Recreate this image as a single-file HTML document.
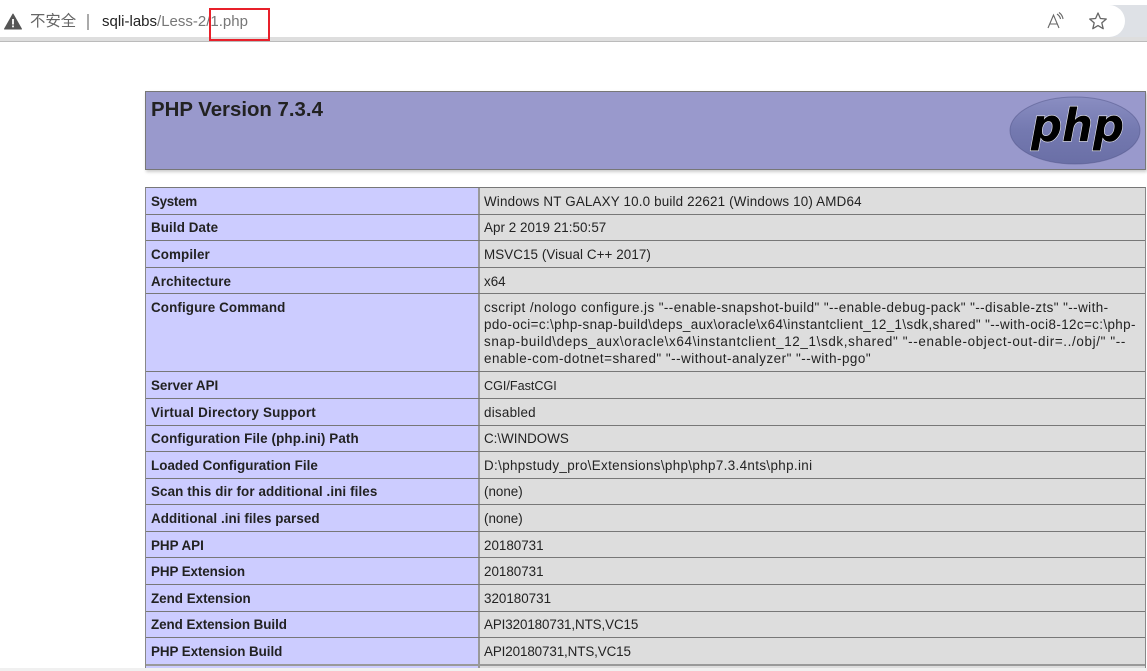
<!DOCTYPE html>
<html lang="zh">
<head>
<meta charset="utf-8">
<title>phpinfo()</title>
<style>
html,body{margin:0;padding:0;background:#fff;width:1147px;height:671px;overflow:hidden}
body{position:relative;font-family:"Liberation Sans","Noto Sans CJK SC",sans-serif;color:#222}
.abs{position:absolute}
.chrome{left:0;top:5px;width:1147px;height:32px;background:#dee1e6}
.strip{left:0;top:37px;width:1147px;height:4px;background:#dedede;border-bottom:1px solid #bbb}
.pill{left:0;top:5px;width:1125px;height:32px;background:#fff;border-radius:0 16px 16px 0}
.url{top:12px;font-size:15px;line-height:20px;white-space:nowrap;color:#777}
.tbl{left:145px;top:187px;width:1001px;height:481px;background:#ddd;border-top:1px solid #777;border-right:1px solid #888;border-left:1px solid #888;box-sizing:border-box;overflow:hidden}
.e{position:absolute;left:146px;top:188px;width:333px;height:480px;background:#ccf}
.vl{position:absolute;left:478px;top:188px;width:2px;height:480px;background:#999}
.r{position:absolute;left:146px;width:999px;height:1px;background:#777}
.k{position:absolute;left:151px;font-size:13.4px;font-weight:bold;line-height:16px;color:#222;white-space:nowrap;margin-top:1px}
.v{position:absolute;left:484px;font-size:13.4px;line-height:16px;color:#222;white-space:nowrap;margin-top:1px}
</style>
</head>
<body>
<div class="abs chrome"></div>
<div class="abs strip"></div>
<div class="abs pill"></div>
<svg class="abs" style="left:4px;top:13px" width="18" height="17" viewBox="0 0 18 17"><path d="M9 1 L17.5 16 H0.5 Z" fill="#555" stroke="#555" stroke-linejoin="round"/><rect x="8.1" y="6" width="1.8" height="5.5" fill="#fff"/><rect x="8.1" y="12.5" width="1.8" height="1.8" fill="#fff"/></svg>
<div class="abs url" style="left:30px;color:#666;font-size:15.4px">不安全</div>
<div class="abs" style="left:87px;top:14px;width:2px;height:16px;background:#aaa"></div>
<div class="abs url" style="left:102px"><span style="color:#222">sqli-labs</span>/Less-2/1.php</div>
<div class="abs" style="left:209px;top:8px;width:61px;height:33px;border:2px solid #e8202a;box-sizing:border-box"></div>
<svg class="abs" style="left:1046px;top:11px" width="20" height="20" viewBox="0 0 20 20" fill="none" stroke="#666" stroke-width="1.1"><path d="M2 17 L7.5 4 L13 17 M4 13 H11"/><path d="M11 3 Q14 5 14.5 8 M13 1.5 Q16.5 4 17 8"/></svg>
<svg class="abs" style="left:1088px;top:11px" width="20" height="20" viewBox="0 0 20 20" fill="none" stroke="#666" stroke-width="1.3"><path d="M10 2 L12.4 7.5 L18.3 8 L13.8 11.9 L15.2 17.7 L10 14.6 L4.8 17.7 L6.2 11.9 L1.7 8 L7.6 7.5 Z" stroke-linejoin="round"/></svg>

<div class="abs" style="left:145px;top:91px;width:1001px;height:79px;background:#99c;border:1px solid #777;box-sizing:border-box;box-shadow:1px 2px 3px #ccc"></div>
<div class="abs" style="left:151px;top:97px;font-size:20.4px;line-height:26px;font-weight:bold;color:#222;white-space:nowrap">PHP Version 7.3.4</div>
<svg class="abs" style="left:1005px;top:92px" width="140" height="76" viewBox="0 0 140 76">
<defs><linearGradient id="g" x1="0" y1="0" x2="0" y2="1"><stop offset="0" stop-color="#8a8ec2"/><stop offset=".5" stop-color="#7479b0"/><stop offset="1" stop-color="#6a6fa6"/></linearGradient></defs>
<ellipse cx="70" cy="38.5" rx="65" ry="33.5" fill="url(#g)" stroke="#4f5488" stroke-opacity=".5" stroke-width="1"/>
<text x="26" y="49" font-family="DejaVu Sans, sans-serif" font-size="45" font-weight="bold" font-style="italic" fill="#000" stroke="#fff" stroke-opacity=".85" stroke-width="1.2" paint-order="stroke" textLength="93" lengthAdjust="spacingAndGlyphs">php</text>
</svg>

<div class="abs tbl"></div>
<div class="e"></div>
<div class="vl"></div>
<div class="r" style="top:214px"></div>
<div class="r" style="top:240px"></div>
<div class="r" style="top:267px"></div>
<div class="r" style="top:293px"></div>
<div class="r" style="top:371px"></div>
<div class="r" style="top:398px"></div>
<div class="r" style="top:425px"></div>
<div class="r" style="top:451px"></div>
<div class="r" style="top:478px"></div>
<div class="r" style="top:504px"></div>
<div class="r" style="top:531px"></div>
<div class="r" style="top:557px"></div>
<div class="r" style="top:584px"></div>
<div class="r" style="top:611px"></div>
<div class="r" style="top:637px"></div>
<div class="r" style="top:664px;height:2px;background:#999"></div>

<div class="k" style="top:193px;letter-spacing:-.3px">System</div>
<div class="v" style="top:193px;letter-spacing:.17px">Windows NT GALAXY 10.0 build 22621 (Windows 10) AMD64</div>
<div class="k" style="top:219px;letter-spacing:.1px">Build Date</div>
<div class="v" style="top:219px;letter-spacing:.05px">Apr 2 2019 21:50:57</div>
<div class="k" style="top:246px;letter-spacing:.1px">Compiler</div>
<div class="v" style="top:246px;letter-spacing:.08px">MSVC15 (Visual C++ 2017)</div>
<div class="k" style="top:273px;letter-spacing:.1px">Architecture</div>
<div class="v" style="top:273px">x64</div>
<div class="k" style="top:299px;letter-spacing:.12px">Configure Command</div>
<div class="v" style="top:299px;letter-spacing:.43px">cscript /nologo configure.js "--enable-snapshot-build" "--enable-debug-pack" "--disable-zts" "--with-</div>
<div class="v" style="top:316px;letter-spacing:.39px">pdo-oci=c:\php-snap-build\deps_aux\oracle\x64\instantclient_12_1\sdk,shared" "--with-oci8-12c=c:\php-</div>
<div class="v" style="top:333px;letter-spacing:.65px">snap-build\deps_aux\oracle\x64\instantclient_12_1\sdk,shared" "--enable-object-out-dir=../obj/" "--</div>
<div class="v" style="top:350px;letter-spacing:.5px">enable-com-dotnet=shared" "--without-analyzer" "--with-pgo"</div>
<div class="k" style="top:377px">Server API</div>
<div class="v" style="top:377px;font-size:12.6px">CGI/FastCGI</div>
<div class="k" style="top:404px;letter-spacing:.24px">Virtual Directory Support</div>
<div class="v" style="top:404px;letter-spacing:.25px">disabled</div>
<div class="k" style="top:430px;letter-spacing:.12px">Configuration File (php.ini) Path</div>
<div class="v" style="top:430px">C:\WINDOWS</div>
<div class="k" style="top:457px;letter-spacing:.04px">Loaded Configuration File</div>
<div class="v" style="top:457px;letter-spacing:.36px">D:\phpstudy_pro\Extensions\php\php7.3.4nts\php.ini</div>
<div class="k" style="top:483px;letter-spacing:.1px">Scan this dir for additional .ini files</div>
<div class="v" style="top:483px">(none)</div>
<div class="k" style="top:510px;letter-spacing:.07px">Additional .ini files parsed</div>
<div class="v" style="top:510px">(none)</div>
<div class="k" style="top:537px">PHP API</div>
<div class="v" style="top:537px">20180731</div>
<div class="k" style="top:563px;letter-spacing:-.08px">PHP Extension</div>
<div class="v" style="top:563px">20180731</div>
<div class="k" style="top:590px">Zend Extension</div>
<div class="v" style="top:590px">320180731</div>
<div class="k" style="top:616px;letter-spacing:-.05px">Zend Extension Build</div>
<div class="v" style="top:616px;letter-spacing:-.1px">API320180731,NTS,VC15</div>
<div class="k" style="top:643px;letter-spacing:-.05px">PHP Extension Build</div>
<div class="v" style="top:643px;letter-spacing:-.1px">API20180731,NTS,VC15</div>

<div class="abs" style="left:0;top:668px;width:1147px;height:3px;background:#f0f0f0"></div>
</body>
</html>
